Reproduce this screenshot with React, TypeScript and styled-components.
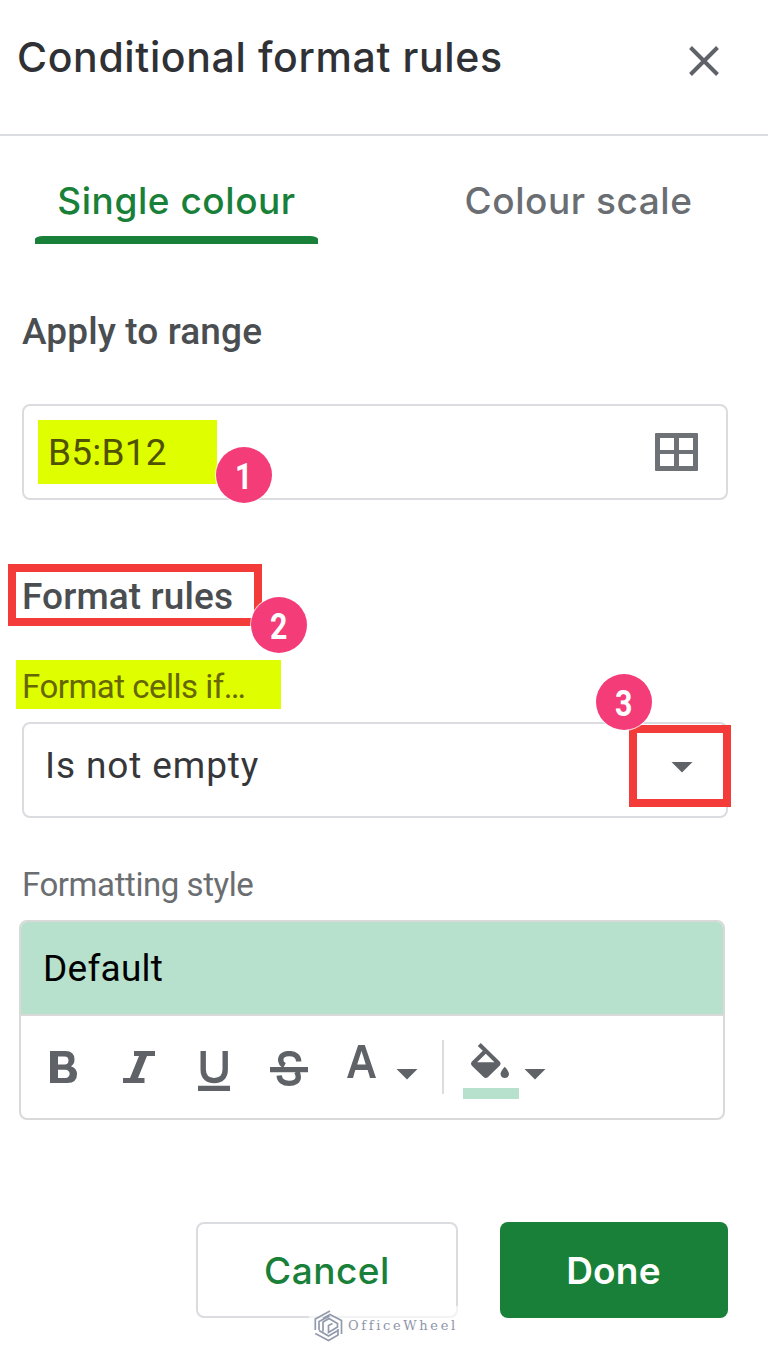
import React from "react";
import styled, { createGlobalStyle } from "styled-components";

const GlobalStyle = createGlobalStyle`
  *, *::before, *::after { box-sizing: border-box; }
  body { margin: 0; background: #fff; }
`;

const brand = "Inter, Roboto, sans-serif";
const body = "Roboto, Arial, sans-serif";

const Panel = styled.main`
  display: flex;
  flex-direction: column;
  width: 768px;
  height: 1364px;
  overflow: hidden;
  background: #fff;
  font-family: ${body};
  white-space: nowrap;
`;

const Header = styled.header`
  display: flex;
  justify-content: space-between;
  align-items: flex-start;
  height: 136px;
  padding: 33px 49px 0 17px;
  border-bottom: 2px solid #dadce0;
`;

const Title = styled.h1`
  margin: 0;
  font: 450 41px/48px ${brand};
  letter-spacing: 0.63px;
  color: #303135;
`;

const CloseButton = styled.button`
  display: flex;
  margin-top: 13px;
  padding: 0;
  border: 0;
  background: none;
`;

const Tabs = styled.nav`
  display: flex;
  gap: 119px;
  padding: 41px 0 0 35px;
  height: 168px;
`;

const Tab = styled.button<{ $active?: boolean }>`
  display: flex;
  justify-content: center;
  width: 283px;
  height: 67px;
  padding: 0;
  border: 0;
  background: none;
  position: relative;
  font: 450 37px/48px ${brand};
  letter-spacing: 0.55px;
  color: ${(p) => (p.$active ? "#188038" : "#6a6e72")};
  &::after {
    content: "";
    position: absolute;
    left: 0;
    right: 0;
    bottom: 0;
    height: 8px;
    border-radius: 8px 8px 0 0 / 3px 3px 0 0;
    background: ${(p) => (p.$active ? "#188038" : "transparent")};
  }
`;

const SectionTitle = styled.h2`
  margin: 0;
  font: 500 37px/44px ${body};
  letter-spacing: 0.12px;
  color: #4a4e51;
`;

const RangeSection = styled.section`
  padding: 6px 41px 0 22px;
  height: 260px;
`;

const Field = styled.div`
  position: relative;
  display: flex;
  align-items: center;
  justify-content: space-between;
  width: 706px;
  height: 96px;
  border: 2px solid #dadce0;
  border-radius: 8px;
`;

const RangeField = styled(Field)`
  margin-top: 50px;
  padding: 0 28px 0 14px;
`;

const RangeValue = styled.div`
  position: relative;
  width: 179px;
  height: 64px;
  padding-left: 10px;
  background: #dfff00;
  font: 400 37px/66px ${body};
  letter-spacing: 0.2px;
  color: #515200;
`;

const Badge = styled.span<{ $left: number; $top: number }>`
  position: absolute;
  z-index: 2;
  left: ${(p) => p.$left}px;
  top: ${(p) => p.$top}px;
  display: flex;
  align-items: center;
  justify-content: center;
  width: 56px;
  height: 56px;
  border-radius: 50%;
  background: #f33c78;
  box-shadow: 0 0 0 1px rgba(255, 255, 255, 0.75);
  font: 700 37px/56px ${body};
  letter-spacing: 0;
  color: #fff;
`;

const Digit = styled.span`
  padding-top: 4px;
  transform: scaleX(0.82);
`;

const RulesSection = styled.section`
  padding: 0 0 0 22px;
  height: 254px;
`;

const RulesFrame = styled.div`
  position: relative;
  width: 254px;
  height: 62px;
  margin-left: -14px;
  padding: 3px 6px;
  border: 8px solid #f33c3a;
`;

const Condition = styled.div`
  width: 265px;
  height: 49px;
  margin: 34px 0 13px -6px;
  padding-left: 6px;
  background: #dfff00;
  font: 400 33px/53px ${body};
  letter-spacing: -0.5px;
  color: #666700;
`;

const SelectField = styled(Field)`
  padding: 0 0 8px 21px;
  font: 400 37px/44px ${body};
  letter-spacing: 0.88px;
  color: #36373a;
`;

const ArrowFrame = styled.div`
  position: absolute;
  left: 605px;
  top: 1px;
  display: flex;
  align-items: center;
  justify-content: center;
  width: 102px;
  height: 82px;
  padding-left: 4px;
  padding-top: 2px;
  border: 8px solid #f33c3a;
`;

const StyleSection = styled.section`
  padding: 47px 0 0 19px;
  height: 404px;
`;

const Label = styled.div`
  padding-left: 3px;
  font: 400 33px/40px ${body};
  letter-spacing: -0.43px;
  color: #6b6e71;
`;

const StyleCard = styled.div`
  width: 706px;
  height: 200px;
  margin-top: 15px;
  overflow: hidden;
  border: 2px solid #d9d9d9;
  border-radius: 8px;
`;

const Preview = styled.div`
  height: 94px;
  padding-left: 22px;
  border-bottom: 2px solid #d9d9d9;
  background: #b7e1cd;
  font: 400 37px/93px ${body};
  letter-spacing: 0.25px;
  color: #000;
`;

const Toolbar = styled.div`
  display: flex;
  align-items: flex-start;
  padding: 24px 0 0 29px;
`;

const Tool = styled.span<{ $gap?: number; $drop?: number }>`
  display: flex;
  margin-left: ${(p) => p.$gap ?? 0}px;
  margin-top: ${(p) => p.$drop ?? 0}px;
`;

const Divider = styled.span`
  width: 2px;
  height: 54px;
  margin-left: 24px;
  background: #dadce0;
`;

const FillTool = styled.span`
  display: flex;
  flex-direction: column;
  align-items: flex-start;
  width: 56px;
  height: 56px;
  margin: 3px 0 0 19px;
  padding-left: 8px;
  border-bottom: 11px solid #b7e1cd;
`;

const Actions = styled.footer`
  position: relative;
  display: flex;
  gap: 42px;
  padding-left: 196px;
`;

const Action = styled.button<{ $primary?: boolean }>`
  width: ${(p) => (p.$primary ? 228 : 262)}px;
  height: 96px;
  padding: 2px ${(p) => (p.$primary ? 1 : 0)}px 0 0;
  border: ${(p) => (p.$primary ? "0" : "2px solid #dadce0")};
  border-radius: 8px;
  background: ${(p) => (p.$primary ? "#188038" : "#fff")};
  font: ${(p) => (p.$primary ? 600 : 500)} 37px/48px ${brand};
  letter-spacing: ${(p) => (p.$primary ? 0.2 : 0.5)}px;
  color: ${(p) => (p.$primary ? "#fff" : "#188038")};
`;

const Watermark = styled.div`
  position: absolute;
  left: 309px;
  top: 84px;
  display: flex;
  align-items: center;
  gap: 5px;
  width: 149px;
  height: 40px;
  padding-left: 5px;
  background: rgba(255, 255, 255, 0.65);
  font: 400 13px/20px "DejaVu Serif", serif;
  letter-spacing: 2.65px;
  color: #8f96a8;
`;

const ink = "#5f6368";

const Caret = () => (
  <svg width="22" height="11" viewBox="0 0 22 11">
    <path d="M0.5 0H21.5L11 10.5Z" fill={ink} />
  </svg>
);

const CloseIcon = () => (
  <svg width="30" height="30" viewBox="0 0 30 30">
    <path d="M1.5 1.5 28.5 28.5M28.5 1.5 1.5 28.5" stroke={ink} strokeWidth="4" />
  </svg>
);

const GridIcon = () => (
  <svg width="43" height="38" viewBox="0 0 43 38">
    <path
      fillRule="evenodd"
      fill="#6e7175"
      d="M1 0H42Q43 0 43 1V37Q43 38 42 38H1Q0 38 0 37V1Q0 0 1 0ZM5 5V17H19V5ZM24 5V17H38V5ZM5 21V33H19V21ZM24 21V33H38V21Z"
    />
  </svg>
);

const BoldIcon = () => (
  <svg width="27" height="32" viewBox="0 0 27 32">
    <path
      fillRule="evenodd"
      fill={ink}
      d="M0 0H15.5Q24.5 0 24.5 8.5Q24.5 13 21 15.3Q27 17.5 27 23.3Q27 32 17.5 32H0ZM8 5.5V13.5H14.5A4 4 0 0 0 14.5 5.5ZM8 18.7V27H15.5A4.1 4.1 0 0 0 15.5 18.7Z"
    />
  </svg>
);

const ItalicIcon = () => (
  <svg width="32" height="32" viewBox="0 0 32 32">
    <path fill={ink} d="M11 0H32V5H24L15 27H21.5V32H0V27H7L16 5H11Z" />
  </svg>
);

const UnderlineIcon = () => (
  <svg width="32" height="40" viewBox="0 0 32 40">
    <path d="M5.2 0V18.5C5.2 25.5 9 29.6 16.2 29.6S27.2 25.5 27.2 18.5V0" fill="none" stroke={ink} strokeWidth="5.4" />
    <path d="M0 34.7H32V40H0Z" fill={ink} />
  </svg>
);

const StrikeIcon = () => (
  <svg width="38" height="36" viewBox="0 0 38 36">
    <path
      d="M28.7 10.5C28.7 5.2 24.7 2.6 19 2.6C13.7 2.6 10.7 5.3 10.7 9C10.7 11.5 12 13.2 14.5 14.5M9.2 24.5C9.5 29.7 13.3 32.4 19 32.4C25 32.4 28.3 29.8 28.3 26C28.3 23.8 27.8 22.2 26.5 20.5"
      fill="none"
      stroke={ink}
      strokeWidth="5.4"
    />
    <path d="M0 16H38V21.2H0Z" fill={ink} />
  </svg>
);

const TextColourIcon = () => (
  <svg width="29" height="33" viewBox="0 0 29 33">
    <path
      fillRule="evenodd"
      fill={ink}
      d="M11.2 0H17.8L29 33H23L20.7 25H8.3L6 33H0ZM14.5 6 10.2 19.5H18.8Z"
    />
  </svg>
);

const BucketIcon = () => (
  <svg width="38" height="35" viewBox="3 0 18 17" preserveAspectRatio="none">
    <path
      fill={ink}
      d="M16.56 8.94L7.62 0 6.21 1.41l2.38 2.38-5.15 5.15c-.59.59-.59 1.54 0 2.12l5.5 5.5c.29.29.68.44 1.06.44s.77-.15 1.06-.44l5.5-5.5c.59-.58.59-1.53 0-2.12zM5.9 9.3L10 5.21 14.1 9.3H5.9zM19 11.5s-2 2.17-2 3.5c0 1.1.9 2 2 2s2-.9 2-2c0-1.33-2-3.5-2-3.5z"
    />
  </svg>
);

const WheelLogo = () => (
  <svg width="29" height="32" viewBox="0 0 29 32">
    <path
      d="M16 1 1.3 9V20M9 8.5 16 4.5 27.5 10.5V24M1.3 23.5 14.5 30.5 24 25V19M5 20V11.5L15.5 6M5 20.5 14.5 26 24 20.5M9 21.5V12L15 8.5 23.5 13.5V17L14.5 22.5V15.5L18.5 13.5"
      fill="none"
      stroke="#939aac"
      strokeWidth="1.7"
    />
  </svg>
);

const Marker = ({ n, left, top }: { n: number; left: number; top: number }) => (
  <Badge $left={left} $top={top}>
    <Digit>{n}</Digit>
  </Badge>
);

export default function App() {
  return (
    <Panel>
      <GlobalStyle />
      <Header>
        <Title>Conditional format rules</Title>
        <CloseButton aria-label="Close">
          <CloseIcon />
        </CloseButton>
      </Header>
      <Tabs>
        <Tab $active>Single colour</Tab>
        <Tab>Colour scale</Tab>
      </Tabs>
      <RangeSection>
        <SectionTitle>Apply to range</SectionTitle>
        <RangeField>
          <RangeValue>
            B5:B12
            <Marker n={1} left={178} top={27} />
          </RangeValue>
          <GridIcon />
        </RangeField>
      </RangeSection>
      <RulesSection>
        <RulesFrame>
          <SectionTitle>Format rules</SectionTitle>
          <Marker n={2} left={235} top={25} />
        </RulesFrame>
        <Condition>Format cells if…</Condition>
        <SelectField>
          Is not empty
          <ArrowFrame>
            <Caret />
          </ArrowFrame>
          <Marker n={3} left={572} top={-50} />
        </SelectField>
      </RulesSection>
      <StyleSection>
        <Label>Formatting style</Label>
        <StyleCard>
          <Preview>Default</Preview>
          <Toolbar>
            <Tool $drop={11}><BoldIcon /></Tool>
            <Tool $gap={46} $drop={11}><ItalicIcon /></Tool>
            <Tool $gap={43} $drop={11}><UnderlineIcon /></Tool>
            <Tool $gap={40} $drop={11}><StrikeIcon /></Tool>
            <Tool $gap={39} $drop={5}><TextColourIcon /></Tool>
            <Tool $gap={20} $drop={29}><Caret /></Tool>
            <Divider />
            <FillTool><BucketIcon /></FillTool>
            <Tool $gap={5} $drop={29}><Caret /></Tool>
          </Toolbar>
        </StyleCard>
      </StyleSection>
      <Actions>
        <Action>Cancel</Action>
        <Action $primary>Done</Action>
        <Watermark>
          <WheelLogo />
          OfficeWheel
        </Watermark>
      </Actions>
    </Panel>
  );
}
